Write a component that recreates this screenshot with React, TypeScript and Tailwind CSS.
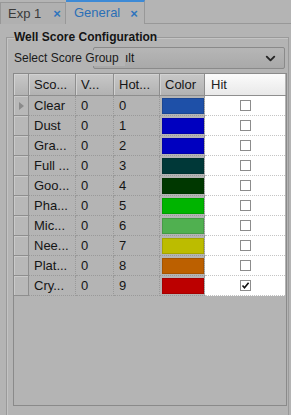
import React from 'react';
import { ChevronDown } from 'lucide-react';

type Score = { name: string; value: string; hot: string; color: string; hit: boolean };

const scores: Score[] = [
  { name: 'Clear', value: '0', hot: '0', color: 'bg-[#1e50a8]', hit: false },
  { name: 'Dust', value: '0', hot: '1', color: 'bg-[#0000c0]', hit: false },
  { name: 'Gra...', value: '0', hot: '2', color: 'bg-[#0000c0]', hit: false },
  { name: 'Full ...', value: '0', hot: '3', color: 'bg-[#003838]', hit: false },
  { name: 'Goo...', value: '0', hot: '4', color: 'bg-[#003800]', hit: false },
  { name: 'Pha...', value: '0', hot: '5', color: 'bg-[#00b400]', hit: false },
  { name: 'Mic...', value: '0', hot: '6', color: 'bg-[#50b050]', hit: false },
  { name: 'Nee...', value: '0', hot: '7', color: 'bg-[#bcbc00]', hit: false },
  { name: 'Plat...', value: '0', hot: '8', color: 'bg-[#bc6000]', hit: false },
  { name: 'Cry...', value: '0', hot: '9', color: 'bg-[#bc0000]', hit: true },
];

const Checkbox = ({ checked }: { checked: boolean }) => (
  <span className="flex h-[11px] w-[11px] items-center justify-center border border-[#8c8c8c] bg-white">
    {checked && (
      <svg width="9" height="9" viewBox="0 0 9 9">
        <path d="M1.5 4.5 L3.5 6.8 L7.6 1.8" fill="none" stroke="#111" strokeWidth="1.6" />
      </svg>
    )}
  </span>
);

const HeaderCell = ({ w, children }: { w: string; children?: React.ReactNode }) => (
  <div
    className={`${w} flex h-full items-center border-r border-[#8e8e8e] bg-gradient-to-b from-[#c8c8c8] to-[#b2b2b2] pl-[5px] shadow-[inset_1px_1px_0_#d2d2d2]`}
  >
    {children}
  </div>
);

const ScoreConfig = () => {
  return (
    <div
      className="h-[415px] w-[291px] overflow-hidden bg-[#b4b4b4] text-[#151515]"
      style={{ fontFamily: '"Liberation Sans", Arial, sans-serif' }}
    >
      {/* tabs */}
      <div className="flex h-[24px] items-end">
        <div className="flex h-[22px] w-[66px] items-center border border-b-0 border-[#989898] bg-[#b0b0b0] pl-[7px] text-[13px] text-[#3a3a3a]">
          <span>Exp 1</span>
          <span className="ml-[12px] text-[13px] font-bold leading-none text-[#2f74bd]">×</span>
        </div>
        <div className="flex h-[24px] w-[79px] items-center border-r border-t-2 border-r-[#989898] border-t-[#3d8ad6] pl-[8px] text-[13px] text-[#2b6fb6]">
          <span>General</span>
          <span className="ml-[10px] text-[13px] font-bold leading-none text-[#2f74bd]">×</span>
        </div>
        <div className="h-[24px] flex-1 border-b border-[#989898]" />
      </div>

      {/* panel */}
      <div className="h-[391px] pt-[6px] pl-[6px] pr-[4px]">
        <fieldset className="h-[420px] border border-[#9a9a9a] pl-[6px] pr-[1px] shadow-[inset_1px_1px_0_#c4c4c4]">
          <legend className="ml-[1px] px-[0px] text-[12px] font-bold leading-[15px] text-[#141414]">
            Well Score Configuration
          </legend>

          <div className="mt-[2px] flex h-[22px] items-center">
            <span className="relative z-10 flex h-[16px] w-[112px] shrink-0 items-center whitespace-nowrap bg-[#b4b4b4] pl-[1px] text-[12px] text-[#1a1a1a]">
              Select Score Group
            </span>
            <div className="-ml-[32px] flex h-[22px] w-[192px] items-center rounded-[2px] border border-[#8a8a8a] bg-gradient-to-b from-[#b6b6b6] to-[#a9a9a9] pl-[31px] text-[12px] text-[#141414]">
              <span className="flex-1">ılt</span>
              <ChevronDown size={15} strokeWidth={3} className="mr-[6px] text-[#262626]" />
            </div>
          </div>

          {/* grid */}
          <div className="mt-[4px] h-[333px] w-[274px] border border-[#8a8a8a] text-[13px]">
            <div className="flex h-[22px] border-b border-[#8e8e8e]">
              <HeaderCell w="w-[15px]" />
              <HeaderCell w="w-[47px]">Sco...</HeaderCell>
              <HeaderCell w="w-[38px]">V...</HeaderCell>
              <HeaderCell w="w-[46px]">Hot...</HeaderCell>
              <HeaderCell w="w-[45px]">Color</HeaderCell>
              <div className="flex h-full w-[80px] items-center bg-gradient-to-b from-[#fbfbfb] to-[#e9e9e9] pl-[6px] text-[#222]">
                Hit
              </div>
            </div>

            {scores.map((s, i) => (
              <div key={s.name} className="flex h-[20px]">
                <div className="flex w-[15px] items-center justify-center border-b border-r border-b-[#8e8e8e] border-r-[#8e8e8e] bg-[#b8b8b8] shadow-[inset_1px_1px_0_#cacaca]">
                  {i === 0 && (
                    <svg width="5" height="8" viewBox="0 0 5 8">
                      <path d="M0 0 L5 4 L0 8 Z" fill="#8a8a8a" />
                    </svg>
                  )}
                </div>
                <div className="flex w-[47px] items-center border-b border-r border-dotted border-[#999] pl-[5px]">
                  {s.name}
                </div>
                <div className="flex w-[38px] items-center border-b border-r border-dotted border-[#999] pl-[5px]">
                  {s.value}
                </div>
                <div className="flex w-[46px] items-center border-b border-r border-dotted border-[#999] pl-[5px]">
                  {s.hot}
                </div>
                <div className="flex w-[45px] items-center border-b border-r border-dotted border-[#999] pl-[2px]">
                  <div className={`h-[16px] w-[42px] ${s.color} shadow-[inset_0_0_0_1px_rgba(0,0,0,0.12)]`} />
                </div>
                <div className="flex w-[80px] items-center justify-center border-b border-dotted border-[#c4c4c4] bg-white">
                  <Checkbox checked={s.hit} />
                </div>
              </div>
            ))}
          </div>
        </fieldset>
      </div>
    </div>
  );
};

export default function App() {
  return <ScoreConfig />;
}
